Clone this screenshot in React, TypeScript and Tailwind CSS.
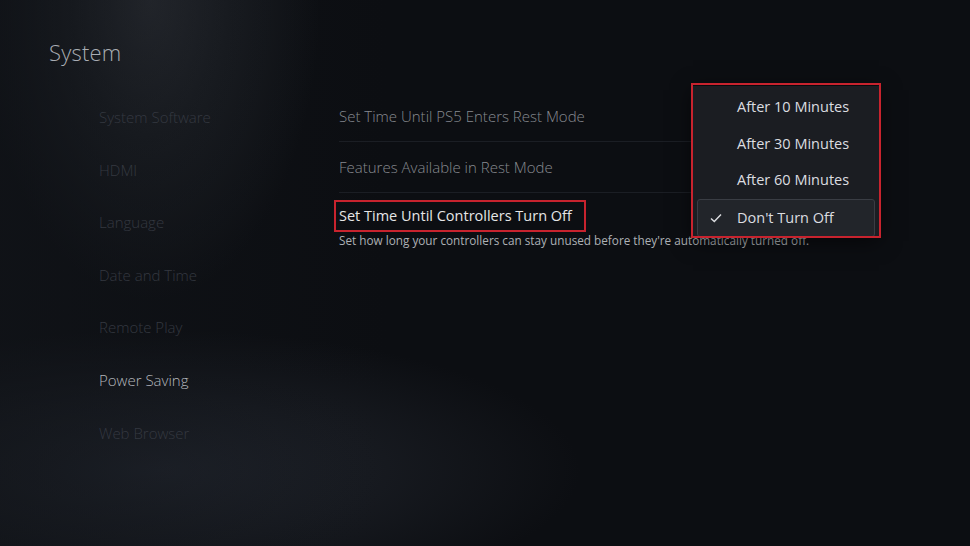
import React from "react";

const menu = [
  { label: "System Software", active: false },
  { label: "HDMI", active: false },
  { label: "Language", active: false },
  { label: "Date and Time", active: false },
  { label: "Remote Play", active: false },
  { label: "Power Saving", active: true },
  { label: "Web Browser", active: false },
];

const options = ["After 10 Minutes", "After 30 Minutes", "After 60 Minutes"];

export default function App() {
  return (
    <div
      className="relative w-[970px] h-[546px] overflow-hidden bg-[#0c0e12] text-[#e6e6e6]"
      style={{ fontFamily: '"Open Sans", "Noto Sans", sans-serif' }}
    >
      <div className="absolute inset-0 bg-[radial-gradient(ellipse_170px_300px_at_150px_0px,#2a2d33_0%,#1a1d22_45%,transparent_100%)]" />
      <div className="absolute inset-0 bg-[radial-gradient(ellipse_420px_140px_at_160px_470px,#1f232b_0%,#171a20_50%,transparent_100%)]" />
      <div className="absolute inset-0 bg-[linear-gradient(90deg,#12151a_0%,transparent_40%)] opacity-60" />

      <div className="relative flex h-full">
        <div className="w-[290px] shrink-0 pl-[49px] pt-[37px]">
          <div className="text-[22px] leading-[30px] font-light text-[#a9adb3] tracking-[0.2px]">System</div>
          <div className="mt-[24px] pl-[50px] flex flex-col">
            {menu.map((m) => (
              <div
                key={m.label}
                className={`h-[52.6px] flex items-center text-[15px] font-light ${m.active ? "text-[#b4b7bc]" : "text-[#343840]"}`}
              >
                {m.label}
              </div>
            ))}
          </div>
        </div>

        <div className="pt-[92px] pl-[49px] w-[590px]">
          <div className="h-[50px] flex items-center border-b border-[#1b1e24] text-[15px] font-light text-[#878a90]">
            Set Time Until PS5 Enters Rest Mode
          </div>
          <div className="h-[51px] flex items-center border-b border-[#1b1e24] text-[15px] font-light text-[#878a90]">
            Features Available in Rest Mode
          </div>
          <div className="mt-[7px] ml-[-5px] w-[252px] h-[32px] flex items-center pl-[3px] border-2 border-[#c8232e] text-[14.5px] text-[#e6e6e6]">
            Set Time Until Controllers Turn Off
          </div>
          <div className="text-[11.75px] leading-[16px] text-[#adb0b5] whitespace-nowrap">
            Set how long your controllers can stay unused before they're automatically turned off.
          </div>
        </div>
      </div>

      <div className="absolute left-[693px] top-[86px] w-[186px] h-[151px] bg-[#1b1d22] shadow-[0_4px_20px_rgba(0,0,0,0.6)] pt-[3px] px-[4px]">
        {options.map((o) => (
          <div key={o} className="h-[36.5px] flex items-center pl-[40px] text-[14.5px] text-[#dcdde0]">
            {o}
          </div>
        ))}
        <div className="h-[38px] flex items-center rounded-[3px] border border-[#3a3d44] bg-[#22252a] text-[14.5px] text-[#dcdde0]">
          <svg width="14" height="14" viewBox="0 0 14 14" className="ml-[11px] mr-[14px]">
            <path d="M2 7.5 L5.3 10.5 L12 3.5" fill="none" stroke="#dcdde0" strokeWidth="1.4" />
          </svg>
          Don't Turn Off
        </div>
      </div>
      <div className="absolute left-[691px] top-[83px] w-[190px] h-[155px] border-2 border-[#c8232e]" />
    </div>
  );
}
